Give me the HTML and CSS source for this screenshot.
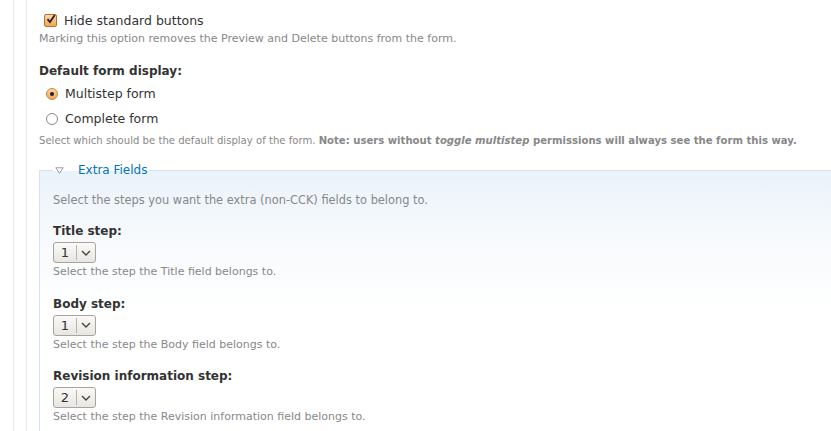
FILE: index.html
```html
<!DOCTYPE html>
<html>
<head>
<meta charset="utf-8">
<link rel="stylesheet" href="styles.css">
</head>
<body>
<div class="outer">
  <div class="inner">
    <div class="item check-item">
      <label class="option"><span class="checkbox"><svg width="12" height="12" viewBox="0 0 12 12"><path d="M2.5 6.2 L5 9 L9.8 2" fill="none" stroke="#222" stroke-width="1.8"/></svg></span>Hide standard buttons</label>
      <div class="desc">Marking this option removes the Preview and Delete buttons from the form.</div>
    </div>
    <div class="item radios">
      <div class="label">Default form display:</div>
      <label class="option"><span class="radio checked"><span class="dot"></span></span>Multistep form</label>
      <label class="option"><span class="radio"></span>Complete form</label>
      <div class="desc note">Select which should be the default display of the form. <strong>Note: users without <em>toggle multistep</em> permissions will always see the form this way.</strong></div>
    </div>
    <fieldset class="fs">
      <legend><span class="tri"><svg width="9" height="7" viewBox="0 0 9 7"><path d="M0.8 0.8 H8.2 L4.5 6.2 Z" fill="none" stroke="#9a9a9a" stroke-width="1"/></svg></span><span class="legend-text">Extra Fields</span></legend>
      <div class="fs-intro">Select the steps you want the extra (non-CCK) fields to belong to.</div>
      <div class="field">
        <div class="label">Title step:</div>
        <div class="select"><span class="val">1</span><span class="arrow"><svg width="10" height="6" viewBox="0 0 10 6"><path d="M1 1 L5 5 L9 1" fill="none" stroke="#444" stroke-width="1.4"/></svg></span></div>
        <div class="desc">Select the step the Title field belongs to.</div>
      </div>
      <div class="field">
        <div class="label">Body step:</div>
        <div class="select"><span class="val">1</span><span class="arrow"><svg width="10" height="6" viewBox="0 0 10 6"><path d="M1 1 L5 5 L9 1" fill="none" stroke="#444" stroke-width="1.4"/></svg></span></div>
        <div class="desc">Select the step the Body field belongs to.</div>
      </div>
      <div class="field">
        <div class="label">Revision information step:</div>
        <div class="select"><span class="val">2</span><span class="arrow"><svg width="10" height="6" viewBox="0 0 10 6"><path d="M1 1 L5 5 L9 1" fill="none" stroke="#444" stroke-width="1.4"/></svg></span></div>
        <div class="desc">Select the step the Revision information field belongs to.</div>
      </div>
    </fieldset>
  </div>
</div>
</body>
</html>
```
FILE: styles.css
```css
html, body {
  margin: 0;
  padding: 0;
  background: #fff;
  height: 100%;
  overflow: hidden;
}
body {
  font-family: "DejaVu Sans", Verdana, sans-serif;
  color: #333;
  font-size: 12px;
}
.outer {
  margin-left: 13px;
  border-left: 1px solid #e1e8ef;
  height: 100%;
}
.inner {
  margin-left: 12px;
  border-left: 1px solid #e1e8ef;
  padding-left: 12px;
  padding-top: 10px;
  height: 100%;
}
.option {
  display: flex;
  align-items: center;
  height: 20px;
  font-size: 12.5px;
  color: #333;
}
.checkbox {
  width: 11px;
  height: 11px;
  border: 1px solid #b5742c;
  background: linear-gradient(#fbd8a8, #f2a65a);
  border-radius: 2px;
  margin: 0 7px 0 5px;
  display: flex;
  align-items: center;
  justify-content: center;
  position: relative;
}
.checkbox svg {
  position: absolute;
  left: 0;
  top: -2px;
}
.radio {
  width: 10px;
  height: 10px;
  border: 1px solid #888;
  border-radius: 50%;
  background: #fff;
  margin: 0 7px 0 7px;
  display: flex;
  align-items: center;
  justify-content: center;
}
.radio.checked {
  border-color: #c98a3e;
  background: linear-gradient(#fbd8a8, #f2a65a);
}
.dot {
  width: 4px;
  height: 4px;
  border-radius: 50%;
  background: #222;
}
.desc {
  font-size: 11px;
  color: #888;
  line-height: 14px;
  margin-top: 2px;
}
.desc strong { font-weight: bold; }
.check-item { margin-bottom: 16px; }
.label {
  font-weight: bold;
  font-size: 12px;
  line-height: 18px;
  color: #333;
}
.radios .label { margin-bottom: 1px; }
.radios .option { height: 25px; }
.radios .desc.note {
  margin-top: 3px;
  font-size: 10.1px;
  white-space: nowrap;
}
.fs {
  margin: 15px 0 0 0;
  padding: 8px 0 0 13px;
  border: none;
  border-top: 1px solid #d3e2ee;
  border-left: 1px solid #d3e2ee;
  background: linear-gradient(#eaf2fa 0px, #f6f9fc 60px, #ffffff 140px);
  min-width: 0;
}
.fs legend {
  padding: 0 2px 0 2px;
  margin-left: 0;
  font-size: 12px;
  color: #0074bd;
  display: flex;
  align-items: center;
}
.tri {
  display: flex;
  margin-right: 14px;
  padding-top: 1px;
}
.fs-intro {
  font-size: 11.4px;
  color: #888;
  margin-top: 8px;
  line-height: 14px;
  margin-bottom: 15px;
}
.field { margin-bottom: 15.5px; }
.field .label { margin-bottom: 2px; }
.select {
  display: flex;
  width: 41px;
  height: 19px;
  border: 1px solid #a8a49c;
  border-radius: 3px;
  background: linear-gradient(#fbfaf8, #e8e6e1);
  align-items: center;
  font-size: 13px;
  color: #333;
}
.val {
  width: 22px;
  text-align: center;
  border-right: 1px solid #b8b4ac;
  height: 15px;
  line-height: 15px;
}
.arrow {
  flex: 1;
  display: flex;
  justify-content: center;
  align-items: center;
}
.field .desc { margin-top: 2px; }
```
